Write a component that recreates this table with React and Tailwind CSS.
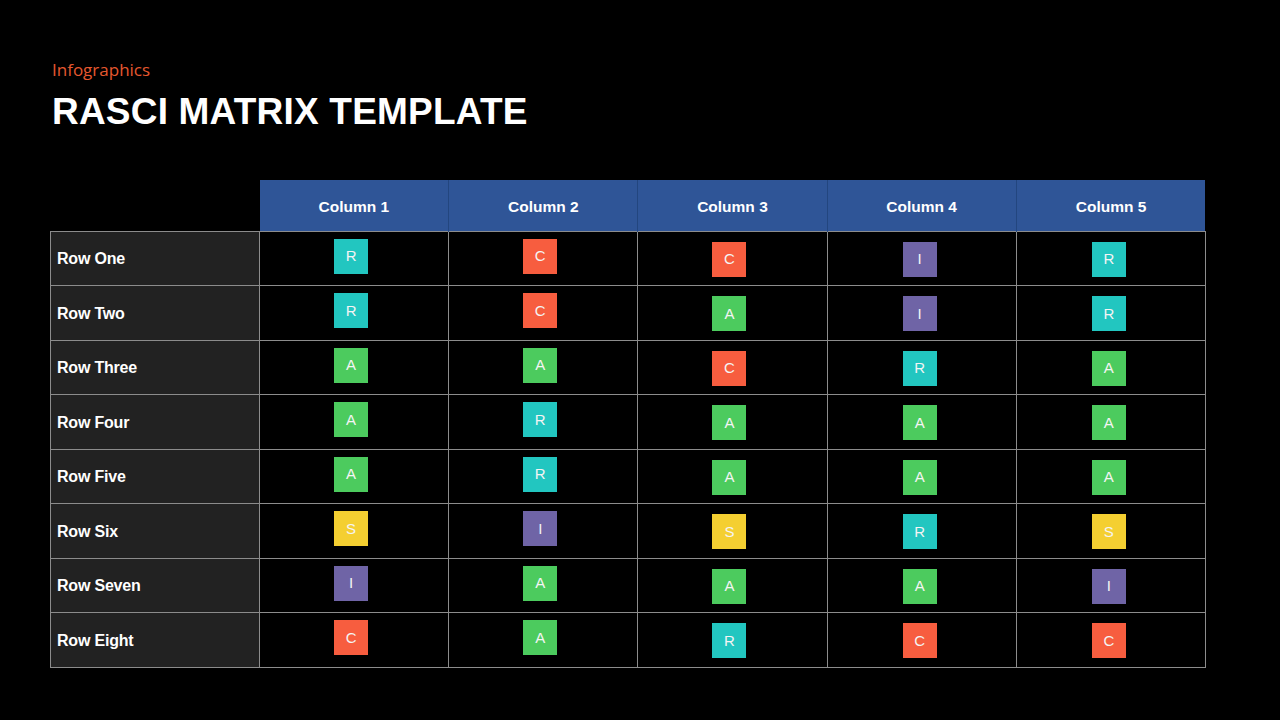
const COLORS = {
  R: "bg-[#22c6c0]",
  A: "bg-[#4ccb5e]",
  C: "bg-[#f75d3f]",
  I: "bg-[#6f64a6]",
  S: "bg-[#f4cf31]",
};

const COLUMNS = ["Column 1", "Column 2", "Column 3", "Column 4", "Column 5"];

const ROWS = [
  { label: "Row One", values: ["R", "C", "C", "I", "R"] },
  { label: "Row Two", values: ["R", "C", "A", "I", "R"] },
  { label: "Row Three", values: ["A", "A", "C", "R", "A"] },
  { label: "Row Four", values: ["A", "R", "A", "A", "A"] },
  { label: "Row Five", values: ["A", "R", "A", "A", "A"] },
  { label: "Row Six", values: ["S", "I", "S", "R", "S"] },
  { label: "Row Seven", values: ["I", "A", "A", "A", "I"] },
  { label: "Row Eight", values: ["C", "A", "R", "C", "C"] },
];

function Badge({ letter, col }) {
  // first two columns sit a little higher, as in the slide
  const shiftY = col < 2 ? "-translate-y-[2px]" : "translate-y-[1px]";
  const shiftX = col < 3 ? "-translate-x-[3px]" : "-translate-x-[2px]";
  return (
    <span
      className={`inline-flex w-[34px] h-[35px] items-center justify-center text-[15px] text-[#f4f4f4] ${COLORS[letter]} ${shiftY} ${shiftX}`}
    >
      {letter}
    </span>
  );
}

export default function App() {
  return (
    <div
      className="w-[1280px] h-[720px] bg-black overflow-hidden"
      style={{ fontFamily: '"Liberation Sans", Arial, sans-serif' }}
    >
      <div className="pl-[52px] pt-[59px]">
        <div
          className="text-[17px] leading-[22px] text-[#e5582f]"
          style={{ fontFamily: '"Open Sans", sans-serif' }}
        >
          Infographics
        </div>
        <h1 className="mt-[10px] text-[37px] leading-[42px] font-bold text-white tracking-[0.2px]">
          RASCI MATRIX TEMPLATE
        </h1>
      </div>

      <div className="pl-[50px] pt-[47px]">
        <table className="border-collapse table-fixed w-[1155px]">
          <colgroup>
            <col className="w-[209px]" />
            {COLUMNS.map((c) => (
              <col key={c} className="w-[189.2px]" />
            ))}
          </colgroup>
          <thead>
            <tr className="h-[51px]">
              <th className="p-0" />
              {COLUMNS.map((c, i) => (
                <th
                  key={c}
                  className={`p-0 pt-[2px] bg-[#2f5597] text-white text-[15.5px] font-bold text-center ${i < 4 ? "border-r border-[#23467f]" : ""}`}
                >
                  {c}
                </th>
              ))}
            </tr>
          </thead>
          <tbody>
            {ROWS.map((row) => (
              <tr key={row.label} className="h-[54.5px]">
                <td className="p-0 pl-[6px] pt-[2px] bg-[#222222] border border-[#8c8c8c] text-white text-[16px] font-bold tracking-[-0.2px]">
                  {row.label}
                </td>
                {row.values.map((v, j) => (
                  <td key={j} className="p-0 border border-[#8c8c8c] text-center align-middle">
                    <Badge letter={v} col={j} />
                  </td>
                ))}
              </tr>
            ))}
          </tbody>
        </table>
      </div>
    </div>
  );
}
